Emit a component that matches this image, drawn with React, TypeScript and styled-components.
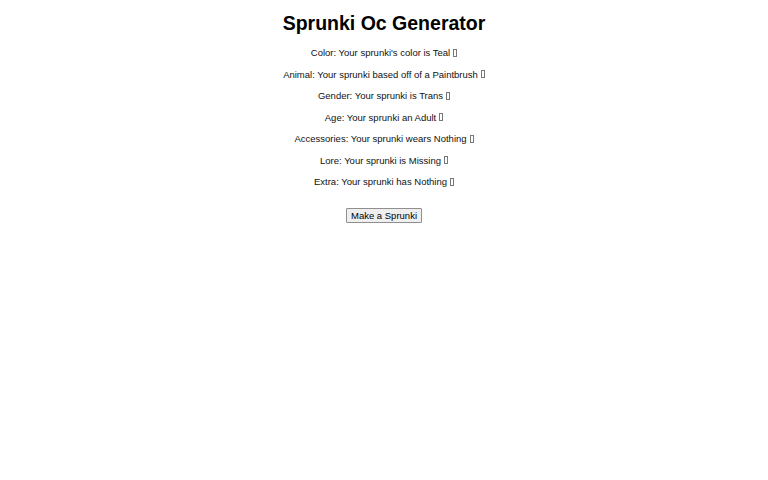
import React from "react";
import styled, { createGlobalStyle } from "styled-components";

const Global = createGlobalStyle`
  body {
    margin: 8px;
    background: #ffffff;
    font-family: "Liberation Sans", Arial, sans-serif;
    color: #000000;
  }
`;

const Page = styled.main`
  display: flex;
  flex-direction: column;
  align-items: center;
  text-align: center;
`;

const Title = styled.h1`
  font-size: 19.5px;
  font-weight: bold;
  margin: 4px 0 13px;
  color: #000;
`;

const Line = styled.p`
  font-size: 9.5px;
  margin: 0 0 11.5px;
  line-height: 10px;
  color: #111;
`;

/* missing-glyph box shown after each trait */
const Glyph = styled.span`
  display: inline-block;
  width: 2px;
  height: 6px;
  margin-left: 3px;
  border: 0.5px solid #777;
  vertical-align: -0.5px;
`;

const MakeButton = styled.button`
  margin-top: 9px;
  font-family: "Liberation Sans", Arial, sans-serif;
  font-size: 9.5px;
  padding: 1px 4px;
  background: #efefef;
  border: 1px solid #8f8f8f;
  border-radius: 1px;
  color: #000;
`;

const traits: [string, string][] = [
  ["Color", "Your sprunki's color is Teal"],
  ["Animal", "Your sprunki based off of a Paintbrush"],
  ["Gender", "Your sprunki is Trans"],
  ["Age", "Your sprunki an Adult"],
  ["Accessories", "Your sprunki wears Nothing"],
  ["Lore", "Your sprunki is Missing"],
  ["Extra", "Your sprunki has Nothing"],
];

export default function App() {
  return (
    <>
      <Global />
      <Page>
        <Title>Sprunki Oc Generator</Title>
        {traits.map(([k, v]) => (
          <Line key={k}>
            {k}: {v}
            <Glyph />
          </Line>
        ))}
        <MakeButton>Make a Sprunki</MakeButton>
      </Page>
    </>
  );
}
